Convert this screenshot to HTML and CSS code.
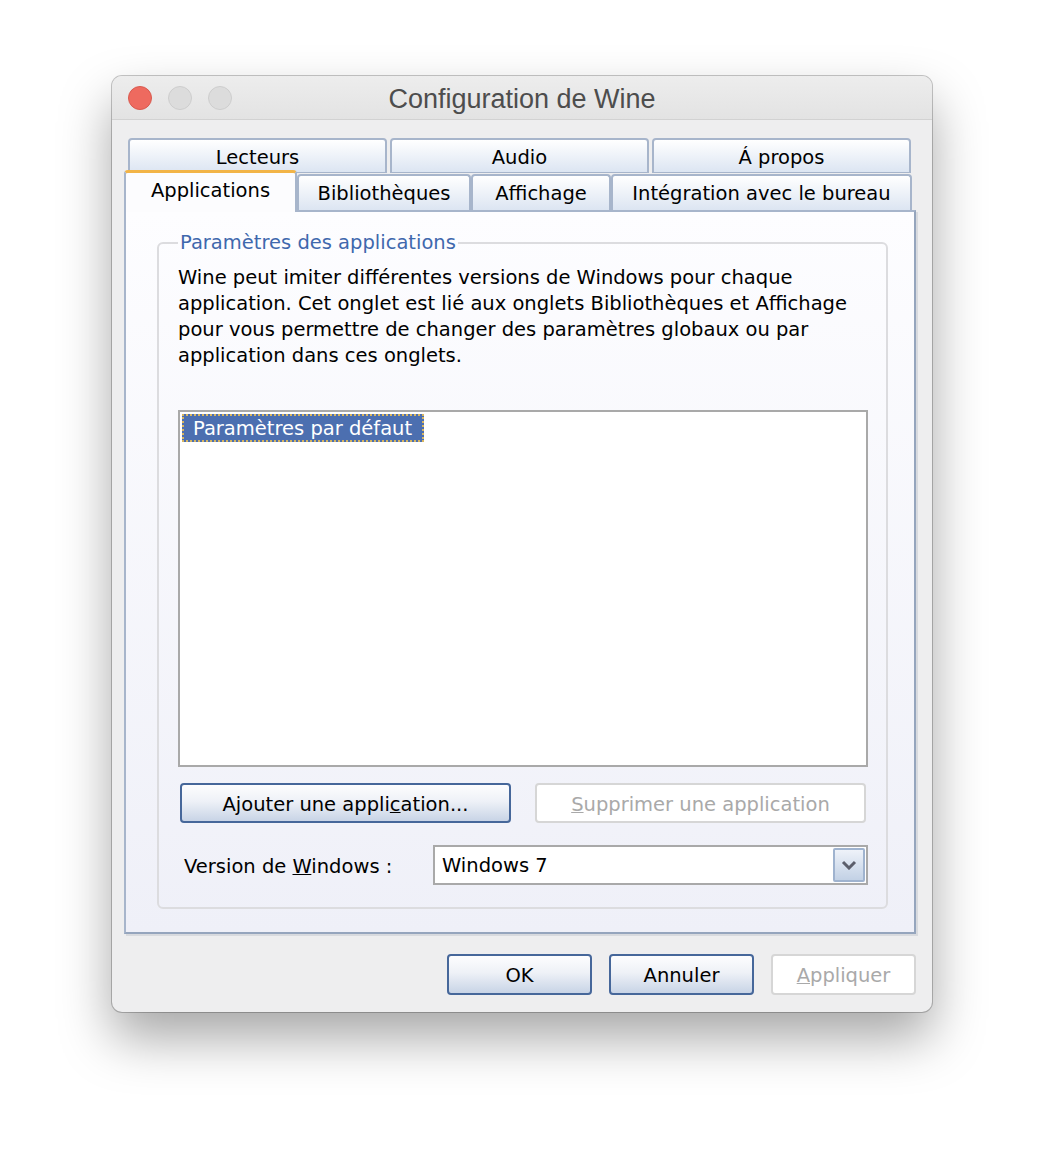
FILE: index.html
```html
<!DOCTYPE html>
<html lang="fr">
<head>
    <meta charset="UTF-8">
    <title>Configuration de Wine</title>
    <link rel="stylesheet" href="styles.css">
</head>
<body>
    <div class="window">
        <div class="titlebar">
            <div class="lights">
                <span class="light close"></span>
                <span class="light"></span>
                <span class="light"></span>
            </div>
            <div class="title">Configuration de Wine</div>
            <div></div>
        </div>

        <div class="main">
            <div class="tabrow back">
                <div class="tab">Lecteurs</div>
                <div class="tab">Audio</div>
                <div class="tab">Á propos</div>
            </div>
            <div class="tabrow front">
                <div class="tab selected tab-apps">Applications</div>
                <div class="tab tab-libs">Bibliothèques</div>
                <div class="tab tab-display">Affichage</div>
                <div class="tab tab-desktop">Intégration avec le bureau</div>
            </div>

            <div class="panel">
                <fieldset class="group">
                    <legend>Paramètres des applications</legend>
                    <p class="desc">Wine peut imiter différentes versions de Windows pour chaque application. Cet onglet est lié aux onglets Bibliothèques et Affichage pour vous permettre de changer des paramètres globaux ou par application dans ces onglets.</p>

                    <div class="list">
                        <span class="item selected">Paramètres par défaut</span>
                    </div>

                    <div class="actions">
                        <button class="btn wide">Ajouter une appli<u>c</u>ation...</button>
                        <button class="btn wide disabled"><u>S</u>upprimer une application</button>
                    </div>

                    <div class="version">
                        <label>Version de <u>W</u>indows :</label>
                        <div class="combo">
                            <span>Windows 7</span>
                            <span class="drop">
                                <svg width="16" height="10" viewBox="0 0 16 10"><polyline points="2,2 8,8 14,2" fill="none" stroke="#5b5e6b" stroke-width="3"/></svg>
                            </span>
                        </div>
                    </div>
                </fieldset>
            </div>

            <div class="footer">
                <button class="btn">OK</button>
                <button class="btn">Annuler</button>
                <button class="btn disabled"><u>A</u>ppliquer</button>
            </div>
        </div>
    </div>
</body>
</html>
```

FILE: styles.css
```css
html, body {
    height: 100%;
}

body {
    margin: 0;
    background-color: #fff;
    font-family: "DejaVu Sans", sans-serif;
    font-size: 19.5px;
    color: #000;
    overflow: hidden;
}

.window {
    width: 820px;
    height: 936px;
    margin: 76px 0 0 112px;
    background-color: #eeeeef;
    border-radius: 10px;
    box-shadow: 0 0 0 1px rgba(0, 0, 0, 0.22), 0 26px 52px rgba(0, 0, 0, 0.35);
    overflow: hidden;
}

/* barre de titre mac */
.titlebar {
    height: 43px;
    border-bottom: 1px solid #d2d2d2;
    background: linear-gradient(#ededed, #e3e3e3);
    display: grid;
    grid-template-columns: 1fr auto 1fr;
    align-items: center;
}

.lights {
    display: flex;
    gap: 16px;
    padding-left: 16px;
}

.light {
    width: 24px;
    height: 24px;
    border-radius: 50%;
    background-color: #dcdcdc;
    border: 1px solid #cdcdcd;
    box-sizing: border-box;
}

.light.close {
    background-color: #ee6a5f;
    border-color: #d85a4f;
}

.title {
    font-family: "Liberation Sans", Arial, sans-serif;
    font-size: 27px;
    color: #4d4d4d;
    padding-top: 3px;
}

.main {
    padding: 18px 16px 0 12px;
}

/* onglets */
.tabrow {
    display: flex;
}

.tabrow.back {
    gap: 3px;
    margin: 0 5px 0 4px;
}

.tabrow.back .tab {
    flex: 1;
    height: 35px;
    padding-top: 2px;
    border-bottom: 1px solid #a7b5cb;
}

.tabrow.front {
    height: 36px;
    margin-top: 1px;
    align-items: flex-end;
}

.tab {
    height: 36px;
    box-sizing: border-box;
    border: 2px solid #a7b5cb;
    border-bottom: none;
    border-radius: 4px 4px 0 0;
    background: linear-gradient(#ffffff, #dce5f2);
    display: flex;
    align-items: center;
    justify-content: center;
}

.tab.selected {
    height: 42px;
    margin-bottom: -2px;
    padding-bottom: 4px;
    position: relative;
    z-index: 1;
    border-top: 3px solid #f2b447;
    background: #fcfcfe;
}

.tab-apps { width: 173px; }
.tab-libs { width: 174px; }
.tab-display { width: 140px; }
.tab-desktop { width: 301px; }

.panel {
    height: 724px;
    box-sizing: border-box;
    border: 2px solid #a7b5cb;
    border-right-color: #95a5bd;
    border-bottom-color: #95a5bd;
    box-shadow: 2px 2px 0 #d8dade;
    background: linear-gradient(#fdfdff, #eff0f8);
    padding: 20px 27px 0 31px;
}

.group {
    height: 677px;
    box-sizing: border-box;
    margin: 0;
    padding: 0 18px 0 19px;
    border: 2px solid #dcdcdf;
    border-radius: 6px;
}

.group legend {
    padding: 0 2px;
    line-height: 22px;
    color: #3f68ad;
}

.desc {
    margin: 11px 0 0;
    line-height: 26px;
}

.list {
    height: 357px;
    margin-top: 41px;
    box-sizing: border-box;
    border: 2px solid #a9a9a9;
    background-color: #fff;
    padding: 2px;
}

.item.selected {
    display: inline-block;
    height: 28px;
    line-height: 25px;
    box-sizing: border-box;
    padding: 0 10px 0 9px;
    background-color: #4c6fb0;
    color: #fff;
    border: 2px dotted #d8b660;
}

.actions {
    display: flex;
    gap: 24px;
    margin-top: 16px;
    padding: 0 2px;
}

/* boutons */
.btn {
    height: 41px;
    width: 145px;
    box-sizing: border-box;
    border: 2px solid #46679a;
    border-radius: 4px;
    background: linear-gradient(#fdfdfe 0%, #eef1f7 45%, #c8d4e6 100%);
    font-family: inherit;
    font-size: 19.5px;
    color: #000;
    padding: 2px 0 0;
}

.btn.wide {
    width: 331px;
    height: 40px;
}

.btn.disabled {
    border-color: #d6d6d6;
    background: #fff;
    color: #a9a9a9;
}

.version {
    display: flex;
    justify-content: space-between;
    align-items: center;
    margin-top: 22px;
}

.version label {
    padding: 2px 0 0 6px;
}

.combo {
    width: 435px;
    height: 40px;
    box-sizing: border-box;
    border: 2px solid #a9a9a9;
    background-color: #fff;
    display: flex;
    align-items: center;
    justify-content: space-between;
    padding: 0 1px 0 7px;
}

.drop {
    width: 32px;
    height: 34px;
    box-sizing: border-box;
    border: 2px solid #9fb3cf;
    border-radius: 2px;
    background: linear-gradient(#eef2f9, #c2d1e5);
    display: flex;
    align-items: center;
    justify-content: center;
}

.footer {
    display: flex;
    justify-content: flex-end;
    gap: 17px;
    padding-top: 20px;
}
```
